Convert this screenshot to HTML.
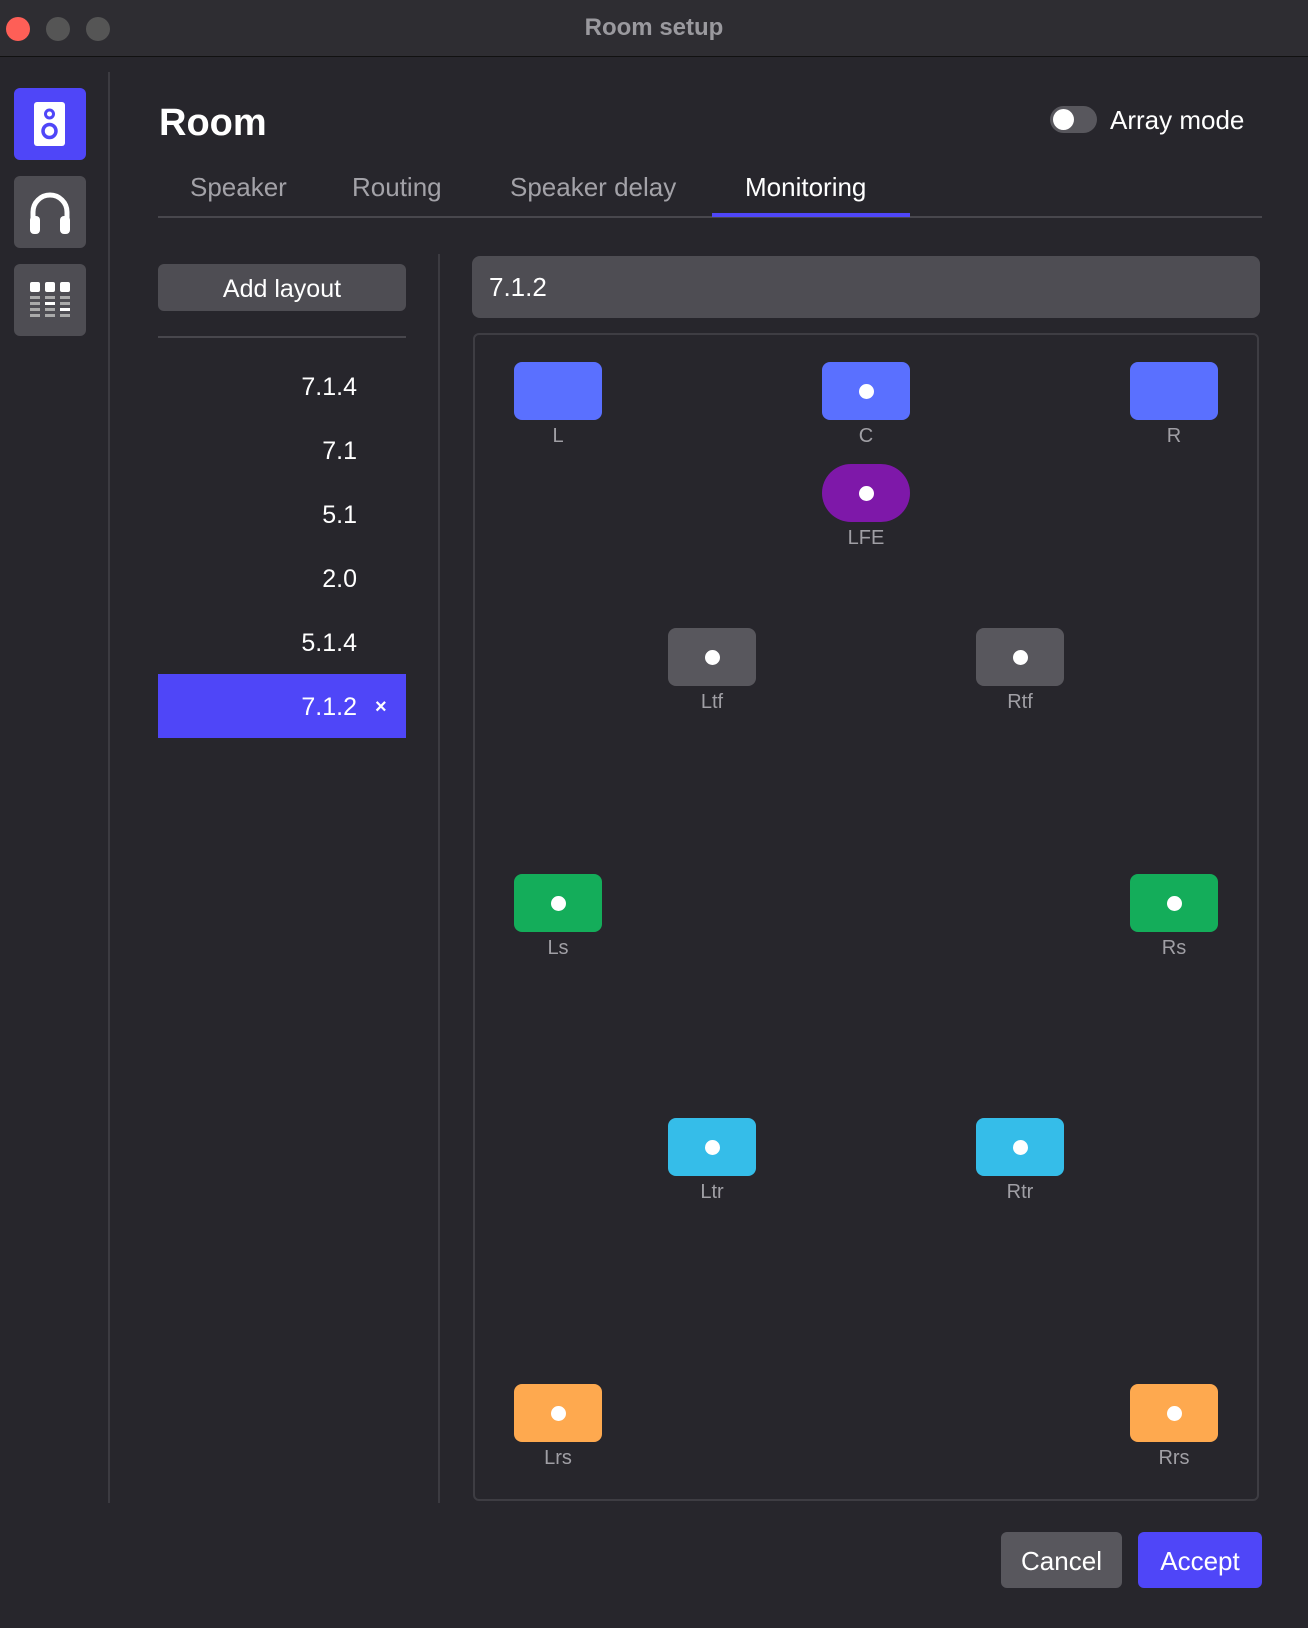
<!DOCTYPE html>
<html><head><meta charset="utf-8"><style>
*{margin:0;padding:0;box-sizing:border-box}
body{width:1308px;height:1628px;background:#27262c;font-family:"Liberation Sans",sans-serif;color:#fff;position:relative;overflow:hidden}
.abs{position:absolute}
.title{left:0;top:0;width:1308px;height:57px;background:#2e2d32;border-bottom:1px solid #111;text-align:center;line-height:56px;font-size:24px;font-weight:bold;color:#9a999e}
.dot{width:24px;height:24px;border-radius:50%;top:17px}
.side{left:14px;width:72px;height:72px;border-radius:6px;background:#4e4d53}
.tab{top:172px;font-size:26px;color:#a3a2a8}
.spk{width:88px;height:58px;border-radius:8px}
.spk i{position:absolute;left:37px;top:22px;width:15px;height:15px;border-radius:50%;background:#fff}
.lab{width:120px;text-align:center;font-size:20px;color:#a09fa5}
.li{left:158px;width:199px;text-align:right;font-size:25px;height:64px;line-height:66px}
</style></head><body>
<div class="abs title">Room setup</div>
<div class="abs dot" style="left:6px;background:#fe5f57"></div>
<div class="abs dot" style="left:46px;background:#555"></div>
<div class="abs dot" style="left:86px;background:#555"></div>

<div class="abs side" style="top:88px;background:#4f46f8"><svg width="72" height="72"><rect x="20" y="14" width="31" height="44" rx="3" fill="#fff"/><circle cx="35.5" cy="26" r="4" fill="none" stroke="#4f46f8" stroke-width="3"/><circle cx="35.5" cy="43" r="6.5" fill="none" stroke="#4f46f8" stroke-width="3.5"/></svg></div>
<div class="abs side" style="top:176px"><svg width="72" height="72"><path d="M19 46 V36 A17 17 0 0 1 53 36 V46" fill="none" stroke="#fff" stroke-width="5"/><rect x="16" y="40" width="10" height="18" rx="4" fill="#fff"/><rect x="46" y="40" width="10" height="18" rx="4" fill="#fff"/></svg></div>
<div class="abs side" style="top:264px"><svg width="72" height="72"><g fill="#fff"><rect x="16" y="18" width="10" height="10" rx="2"/><rect x="31" y="18" width="10" height="10" rx="2"/><rect x="46" y="18" width="10" height="10" rx="2"/></g><g fill="#aaa"><rect x="16" y="32" width="10" height="3"/><rect x="31" y="32" width="10" height="3"/><rect x="46" y="32" width="10" height="3"/><rect x="16" y="38" width="10" height="3"/><rect x="31" y="38" width="10" height="3" fill="#fff"/><rect x="46" y="38" width="10" height="3"/><rect x="16" y="44" width="10" height="3"/><rect x="31" y="44" width="10" height="3"/><rect x="46" y="44" width="10" height="3" fill="#fff"/><rect x="16" y="50" width="10" height="3"/><rect x="31" y="50" width="10" height="3"/><rect x="46" y="50" width="10" height="3"/></g></svg></div>
<div class="abs" style="left:108px;top:72px;width:2px;height:1431px;background:#3c3b41"></div>

<div class="abs" style="left:159px;top:102px;font-size:38px;font-weight:bold">Room</div>
<div class="abs" style="left:1050px;top:106px;width:47px;height:27px;border-radius:14px;background:#58575d"></div>
<div class="abs" style="left:1053px;top:109px;width:21px;height:21px;border-radius:50%;background:#fff"></div>
<div class="abs" style="left:1110px;top:105px;font-size:26px">Array mode</div>

<div class="abs tab" style="left:190px">Speaker</div>
<div class="abs tab" style="left:352px">Routing</div>
<div class="abs tab" style="left:510px">Speaker delay</div>
<div class="abs tab" style="left:745px;color:#fff">Monitoring</div>
<div class="abs" style="left:158px;top:216px;width:1104px;height:2px;background:#48474d"></div>
<div class="abs" style="left:712px;top:213px;width:198px;height:4px;background:#4f46f8"></div>

<div class="abs" style="left:158px;top:264px;width:248px;height:47px;border-radius:6px;background:#4e4d53;text-align:center;line-height:50px;font-size:25px">Add layout</div>
<div class="abs" style="left:158px;top:336px;width:248px;height:2px;background:#48474d"></div>
<div class="abs li" style="top:354px">7.1.4</div>
<div class="abs li" style="top:418px">7.1</div>
<div class="abs li" style="top:482px">5.1</div>
<div class="abs li" style="top:546px">2.0</div>
<div class="abs li" style="top:610px">5.1.4</div>
<div class="abs" style="left:158px;top:674px;width:248px;height:64px;background:#4f46f8"></div>
<div class="abs li" style="top:674px">7.1.2</div>
<div class="abs" style="left:375px;top:674px;line-height:66px;font-size:20px;font-weight:bold">×</div>
<div class="abs" style="left:438px;top:254px;width:2px;height:1249px;background:#3c3b41"></div>

<div class="abs" style="left:472px;top:256px;width:788px;height:62px;border-radius:8px;background:#4e4d53;font-size:26px;line-height:62px;padding-left:17px">7.1.2</div>
<div class="abs" style="left:473px;top:333px;width:786px;height:1168px;border:2px solid #3e3d43;border-radius:6px"></div>

<div class="abs spk" style="left:514px;top:362px;background:#5a70ff"></div><div class="abs lab" style="left:498px;top:425px">L</div>
<div class="abs spk" style="left:822px;top:362px;background:#5a70ff"><i></i></div><div class="abs lab" style="left:806px;top:425px">C</div>
<div class="abs spk" style="left:1130px;top:362px;background:#5a70ff"></div><div class="abs lab" style="left:1114px;top:425px">R</div>
<div class="abs spk" style="left:822px;top:464px;background:#7e18a9;border-radius:29px"><i></i></div><div class="abs lab" style="left:806px;top:527px">LFE</div>
<div class="abs spk" style="left:668px;top:628px;background:#58575d"><i></i></div><div class="abs lab" style="left:652px;top:691px">Ltf</div>
<div class="abs spk" style="left:976px;top:628px;background:#58575d"><i></i></div><div class="abs lab" style="left:960px;top:691px">Rtf</div>
<div class="abs spk" style="left:514px;top:874px;background:#14ad5a"><i></i></div><div class="abs lab" style="left:498px;top:937px">Ls</div>
<div class="abs spk" style="left:1130px;top:874px;background:#14ad5a"><i></i></div><div class="abs lab" style="left:1114px;top:937px">Rs</div>
<div class="abs spk" style="left:668px;top:1118px;background:#35bde9"><i></i></div><div class="abs lab" style="left:652px;top:1181px">Ltr</div>
<div class="abs spk" style="left:976px;top:1118px;background:#35bde9"><i></i></div><div class="abs lab" style="left:960px;top:1181px">Rtr</div>
<div class="abs spk" style="left:514px;top:1384px;background:#fea94f"><i></i></div><div class="abs lab" style="left:498px;top:1447px">Lrs</div>
<div class="abs spk" style="left:1130px;top:1384px;background:#fea94f"><i></i></div><div class="abs lab" style="left:1114px;top:1447px">Rrs</div>

<div class="abs" style="left:1001px;top:1532px;width:121px;height:56px;border-radius:6px;background:#58575d;text-align:center;line-height:58px;font-size:26px">Cancel</div>
<div class="abs" style="left:1138px;top:1532px;width:124px;height:56px;border-radius:6px;background:#4f46f8;text-align:center;line-height:58px;font-size:26px">Accept</div>
</body></html>
